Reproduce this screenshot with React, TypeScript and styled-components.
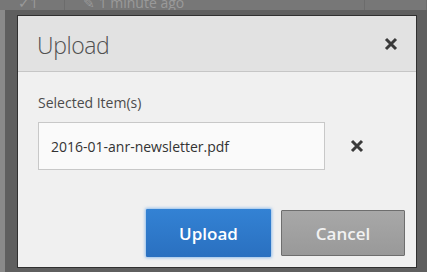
import React from 'react'
import styled, { createGlobalStyle } from 'styled-components'

const GlobalStyle = createGlobalStyle`
  html, body {
    margin: 0;
    padding: 0;
    background: #606060;
  }
  * {
    box-sizing: border-box;
  }
`

const CloseIcon: React.FC<{ size: number }> = ({ size }) => (
  <svg width={size} height={size} viewBox='0 0 14 14'>
    <path d='M2 2 L12 12 M12 2 L2 12' stroke='#3a3a3a' strokeWidth='3' strokeLinecap='butt' fill='none' />
  </svg>
)

const App: React.FC = () => {
  return (
    <Screen>
      <GlobalStyle />
      <Backdrop>
        <BackStrip>
          <BackCell $width={65}>✓1</BackCell>
          <BackCell $width={300}>✎ 1 minute ago</BackCell>
          <BackCell $width={62} />
        </BackStrip>
        <BackBody>
          <BackEdge />
          <BackShade />
        </BackBody>
      </Backdrop>
      <Dialog>
        <Header>
          <Title>Upload</Title>
          <IconButton $right={17}>
            <CloseIcon size={14} />
          </IconButton>
        </Header>
        <Body>
          <Label>Selected Item(s)</Label>
          <ItemRow>
            <FileBox>2016-01-anr-newsletter.pdf</FileBox>
            <IconButton $right={0}>
              <CloseIcon size={14} />
            </IconButton>
          </ItemRow>
          <Actions>
            <Button $primary>Upload</Button>
            <Button>Cancel</Button>
          </Actions>
        </Body>
      </Dialog>
    </Screen>
  )
}

export default App

export const Screen = styled.div`
  position: relative;
  width: 427px;
  height: 272px;
  overflow: hidden;
  font-family: 'Open Sans', 'Liberation Sans', sans-serif;
`
export const Backdrop = styled.div`
  width: 100%;
  height: 100%;
  display: flex;
  flex-direction: column;
`
export const BackStrip = styled.div`
  height: 10px;
  display: flex;
  background: #777777;
  overflow: hidden;
`
export const BackCell = styled.div<{ $width: number }>`
  width: ${p => p.$width}px;
  padding-left: 18px;
  margin-top: -5px;
  border-right: 1px solid #6c6c6c;
  font-size: 14px;
  line-height: 16px;
  color: #9a9a9a;
  white-space: nowrap;
`
export const BackBody = styled.div`
  flex: 1;
  display: flex;
`
export const BackEdge = styled.div`
  width: 5px;
  background: #8a8a8a;
`
export const BackShade = styled.div`
  flex: 1;
  background: #5f5f5f;
`
export const Dialog = styled.div`
  position: absolute;
  left: 17px;
  top: 15px;
  width: 400px;
  height: 253px;
  display: flex;
  flex-direction: column;
  border: 1px solid #303030;
  background: #f0f0f0;
`
export const Header = styled.div`
  position: relative;
  height: 56px;
  display: flex;
  align-items: center;
  padding-left: 19px;
  background: #e2e2e2;
  border-bottom: 1px solid #c6c6c6;
`
export const Title = styled.h1`
  margin: 0;
  margin-top: 3px;
  font-size: 23px;
  font-weight: 300;
  color: #505050;
  letter-spacing: -0.4px;
`
export const IconButton = styled.button<{ $right: number }>`
  margin-left: auto;
  margin-right: ${p => p.$right}px;
  width: 16px;
  height: 16px;
  padding: 0;
  display: flex;
  align-items: center;
  justify-content: center;
  background: none;
  border: none;
  cursor: pointer;
`
export const Body = styled.div`
  flex: 1;
  display: flex;
  flex-direction: column;
  padding: 22px 10px 10px 20px;
`
export const Label = styled.div`
  font-size: 14px;
  line-height: 18px;
  color: #4b4b4b;
`
export const ItemRow = styled.div`
  margin-top: 10px;
  width: 327px;
  display: flex;
  align-items: center;
`
export const FileBox = styled.div`
  width: 287px;
  height: 48px;
  display: flex;
  align-items: center;
  padding-left: 12px;
  background: #fafafa;
  border: 1px solid #c8c8c8;
  font-size: 14px;
  color: #333333;
`
export const Actions = styled.div`
  margin-top: auto;
  display: flex;
  justify-content: flex-end;
  align-items: center;
  gap: 10px;
`
export const Button = styled.button<{ $primary?: boolean }>`
  width: ${p => (p.$primary ? 125 : 124)}px;
  height: ${p => (p.$primary ? 48 : 46)}px;
  margin-right: ${p => (p.$primary ? 0 : 1)}px;
  font-family: 'Open Sans', 'Liberation Sans', sans-serif;
  font-size: 17px;
  font-weight: 600;
  color: ${p => (p.$primary ? '#ffffff' : '#f2f2f2')};
  background: ${p =>
    p.$primary
      ? 'linear-gradient(#3382d4, #2a70c0)'
      : 'linear-gradient(#a8a8a8, #999999)'};
  border: ${p => (p.$primary ? 'none' : '1px solid #6e6e6e')};
  border-radius: 1px;
  box-shadow: ${p => (p.$primary ? '0 0 3px 1px rgba(110, 170, 235, 0.7)' : 'none')};
  cursor: pointer;
`
